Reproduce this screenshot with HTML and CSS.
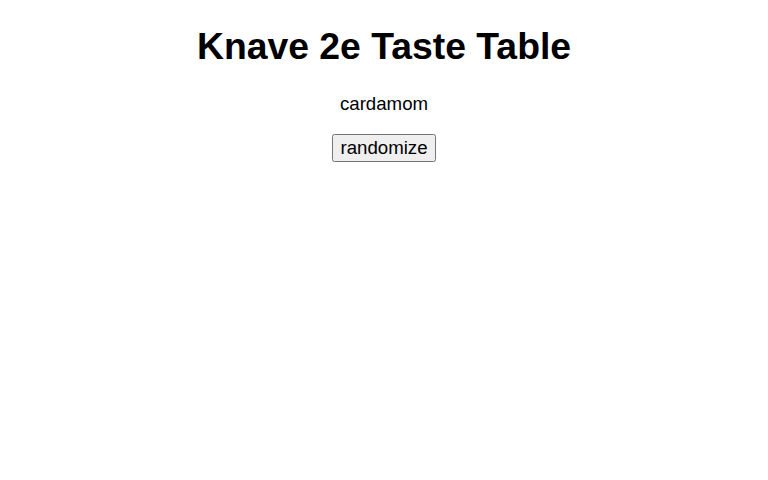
FILE: index.html
```html
<!DOCTYPE html>
<html lang="en">
<head>
    <meta charset="UTF-8">
    <meta name="viewport" content="width=device-width, initial-scale=1.0">
    <title>Knave 2e Taste Table</title>
    <link rel="stylesheet" href="styles.css">
</head>
<body>
    <h1>Knave 2e Taste Table</h1>
    <p id="taste">cardamom</p>
    <p><button id="roll" onclick="randomize()">randomize</button></p>

    <script>
        const tastes = [
            'cardamom', 'honey', 'smoke', 'iron', 'vinegar', 'mint',
            'ash', 'clove', 'salt', 'moss', 'pepper', 'tar'
        ];

        function randomize() {
            const pick = tastes[Math.floor(Math.random() * tastes.length)];
            document.getElementById('taste').textContent = pick;
        }
    </script>
</body>
</html>
```

FILE: styles.css
```css
body {
    margin: 0;
    padding: 0 8px;
    font-family: "Liberation Sans", Arial, sans-serif;
    font-size: 18.67px;
    text-align: center;
    color: #000;
    background: #fff;
}

button {
    font-family: inherit;
    font-size: inherit;
}
```
